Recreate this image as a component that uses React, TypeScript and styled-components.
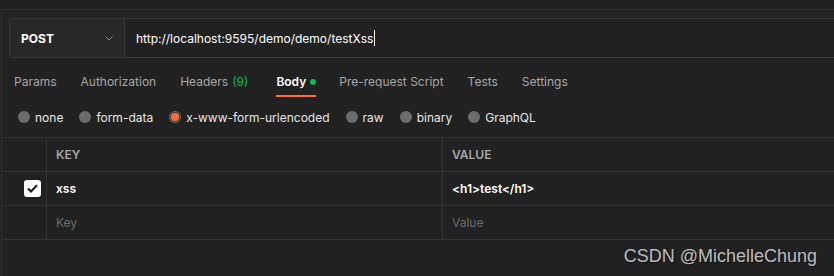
import styled, { createGlobalStyle } from 'styled-components';

const GlobalStyle = createGlobalStyle`
  html, body {
    margin: 0;
    padding: 0;
    background: #212121;
  }
  body {
    font-family: Inter, "Noto Sans", "Liberation Sans", sans-serif;
    color: #e6e6e6;
  }
`;

const Page = styled.div`
  position: relative;
  width: 834px;
  height: 276px;
  overflow: hidden;
  background: #212121;
  padding-top: 9px;
  box-sizing: border-box;
`;

const Panel = styled.div`
  margin-left: 1px;
  border-top: 1px solid #2f2f2f;
  border-left: 1px solid #2f2f2f;
  height: 100%;
  padding-top: 8px;
  box-sizing: border-box;
`;

const UrlBar = styled.div`
  display: flex;
  margin-left: 7px;
  height: 40px;
  border: 1px solid #383838;
  border-right: none;
  border-radius: 4px 0 0 4px;
  box-sizing: border-box;
`;

const MethodSelect = styled.div`
  display: flex;
  align-items: center;
  justify-content: space-between;
  width: 115px;
  padding: 0 10px 0 11px;
  box-sizing: border-box;
  background: #282828;
  border-right: 1px solid #383838;
  border-radius: 4px 0 0 4px;
  font-size: 12px;
  font-weight: 700;
  color: #ffffff;
`;

const UrlInput = styled.div`
  display: flex;
  align-items: center;
  padding-left: 11px;
  font-size: 12px;
  color: #ffffff;
`;

const Caret = styled.span`
  display: inline-block;
  width: 1px;
  height: 16px;
  margin-left: 1px;
  background: #ffffff;
`;

const Tabs = styled.div`
  display: flex;
  align-items: stretch;
  height: 34px;
  padding-left: 12px;
  margin-top: 5px;
  gap: 24px;
  box-sizing: border-box;
`;

const Tab = styled.div<{ $active?: boolean }>`
  display: flex;
  align-items: center;
  gap: 4px;
  font-size: 12px;
  color: ${(p) => (p.$active ? '#ffffff' : '#a6a6a6')};
  font-weight: ${(p) => (p.$active ? 600 : 400)};
  border-bottom: 2px solid ${(p) => (p.$active ? '#ff6c37' : 'transparent')};
  margin: ${(p) => (p.$active ? '0 -1px 0 4px' : '0')};
  box-sizing: border-box;
  padding-top: 5px;
`;

const Count = styled.span`
  color: #0cbb52;
`;

const Dot = styled.span`
  width: 6px;
  height: 6px;
  border-radius: 50%;
  background: #0cbb52;
`;

const Radios = styled.div`
  display: flex;
  align-items: center;
  height: 40px;
  padding-left: 16px;
  gap: 16px;
`;

const RadioOption = styled.label`
  display: flex;
  align-items: center;
  gap: 5px;
  font-size: 12px;
  color: #e6e6e6;
`;

const RadioCircle = styled.span<{ $checked?: boolean }>`
  width: 12px;
  height: 12px;
  border-radius: 50%;
  background: #6b6b6b;
  display: flex;
  align-items: center;
  justify-content: center;
  &::after {
    content: '';
    display: ${(p) => (p.$checked ? 'block' : 'none')};
    width: 8px;
    height: 8px;
    border-radius: 50%;
    background: #ff6c37;
    box-shadow: 0 0 0 1px #3a3a3a;
  }
`;

const Table = styled.div`
  border-top: 1px solid #333333;
  border-bottom: 1px solid #333333;
`;

const Row = styled.div`
  display: grid;
  grid-template-columns: 44px 396px 1fr;
  height: 33px;
  & + & {
    border-top: 1px solid #333333;
  }
`;

const Cell = styled.div<{ $muted?: boolean; $head?: boolean; $bold?: boolean }>`
  display: flex;
  align-items: center;
  padding-left: 9px;
  border-left: 1px solid #333333;
  font-size: 12px;
  color: ${(p) => (p.$head ? '#a6a6a6' : p.$muted ? '#6b6b6b' : '#ffffff')};
  font-weight: ${(p) => (p.$head || p.$bold ? 600 : 400)};
`;

const CheckCell = styled.div`
  display: flex;
  align-items: center;
  justify-content: flex-end;
  padding-right: 5px;
`;

const Checkbox = styled.span`
  width: 17px;
  height: 17px;
  border-radius: 3px;
  background: #ffffff;
  display: flex;
  align-items: center;
  justify-content: center;
`;

const Watermark = styled.div`
  position: absolute;
  right: 17px;
  bottom: 9px;
  font-family: "Liberation Sans", Arial, sans-serif;
  font-size: 18px;
  color: rgba(230, 230, 230, 0.8);
  text-shadow: 1px 1px 1px rgba(0, 0, 0, 0.5);
`;

const tabs = ['Params', 'Authorization', 'Headers', 'Body', 'Pre-request Script', 'Tests', 'Settings'];
const radios = ['none', 'form-data', 'x-www-form-urlencoded', 'raw', 'binary', 'GraphQL'];

export default function App() {
  return (
    <>
      <GlobalStyle />
      <Page>
        <Panel>
          <UrlBar>
            <MethodSelect>
              POST
              <svg width="10" height="10" viewBox="0 0 10 10" fill="none">
                <path d="M1.5 3.5 L5 7 L8.5 3.5" stroke="#8c8c8c" strokeWidth="1" />
              </svg>
            </MethodSelect>
            <UrlInput>
              http://localhost:9595/demo/demo/testXss
              <Caret />
            </UrlInput>
          </UrlBar>
          <Tabs>
            {tabs.map((t) => (
              <Tab key={t} $active={t === 'Body'}>
                {t}
                {t === 'Headers' && <Count>(9)</Count>}
                {t === 'Body' && <Dot />}
              </Tab>
            ))}
          </Tabs>
          <Radios>
            {radios.map((r) => (
              <RadioOption key={r}>
                <RadioCircle $checked={r === 'x-www-form-urlencoded'} />
                {r}
              </RadioOption>
            ))}
          </Radios>
          <Table>
            <Row>
              <CheckCell />
              <Cell $head>KEY</Cell>
              <Cell $head>VALUE</Cell>
            </Row>
            <Row>
              <CheckCell>
                <Checkbox>
                  <svg width="11" height="9" viewBox="0 0 11 9" fill="none">
                    <path d="M1 4.5 L4 7.5 L10 1.2" stroke="#1a1a1a" strokeWidth="2" />
                  </svg>
                </Checkbox>
              </CheckCell>
              <Cell $bold>xss</Cell>
              <Cell $bold>&lt;h1&gt;test&lt;/h1&gt;</Cell>
            </Row>
            <Row>
              <CheckCell />
              <Cell $muted>Key</Cell>
              <Cell $muted>Value</Cell>
            </Row>
          </Table>
        </Panel>
        <Watermark>CSDN @MichelleChung</Watermark>
      </Page>
    </>
  );
}
